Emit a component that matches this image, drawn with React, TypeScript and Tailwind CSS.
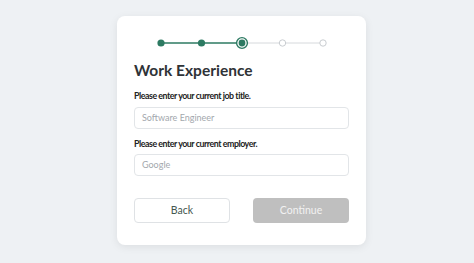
import React from "react";

export default function App() {
  const green = "#2d7a62";
  return (
    <div className="w-[474px] h-[263px] bg-[#eef1f4] overflow-hidden" style={{ fontFamily: "Lato, 'Open Sans', sans-serif" }}>
      <div className="ml-[117px] mt-[16px] w-[249px] h-[229px] bg-white rounded-[8px] shadow-[0_2px_8px_rgba(0,0,0,0.08)] px-[17px] pt-[20px] flex flex-col">
        <div className="flex justify-center">
          <svg width="174" height="14" viewBox="0 0 174 14">
            <line x1="6" y1="7" x2="87" y2="7" stroke={green} strokeWidth="1.5" />
            <line x1="87" y1="7" x2="168" y2="7" stroke="#d6d9dc" strokeWidth="1" />
            <circle cx="6" cy="7" r="3.6" fill={green} />
            <circle cx="46.5" cy="7" r="3.6" fill={green} />
            <circle cx="87" cy="7" r="5.4" fill="white" stroke={green} strokeWidth="1.4" />
            <circle cx="87" cy="7" r="3.4" fill={green} />
            <circle cx="127.5" cy="7" r="3.2" fill="white" stroke="#c9cdd1" strokeWidth="1" />
            <circle cx="168" cy="7" r="3.2" fill="white" stroke="#c9cdd1" strokeWidth="1" />
          </svg>
        </div>
        <h1 className="mt-[9px] text-[15.5px] leading-[22px] font-bold text-[#2f3337]">
          Work Experience
        </h1>
        <label className="mt-[8px] text-[8.8px] leading-[14px] font-bold tracking-[-0.45px] text-[#222]">
          Please enter your current job title.
        </label>
        <div className="mt-[4px] h-[22px] border border-[#e2e5e8] rounded-[4px] flex items-center pl-[7px] text-[9px] text-[#a3a8ad]">
          Software Engineer
        </div>
        <label className="mt-[8px] text-[8.8px] leading-[14px] font-bold tracking-[-0.45px] text-[#222]">
          Please enter your current employer.
        </label>
        <div className="mt-[3px] h-[22px] border border-[#e2e5e8] rounded-[4px] flex items-center pl-[7px] text-[9px] text-[#a3a8ad]">
          Google
        </div>
        <div className="mt-[22px] flex justify-between">
          <div className="w-[96px] h-[25px] border border-[#dfe2e5] rounded-[4px] flex items-center justify-center text-[10.5px] text-[#44584f]">
            Back
          </div>
          <div className="w-[96px] h-[25px] bg-[#bfbfbf] rounded-[4px] flex items-center justify-center text-[10.5px] text-[#f2f2f2]">
            Continue
          </div>
        </div>
      </div>
    </div>
  );
}
